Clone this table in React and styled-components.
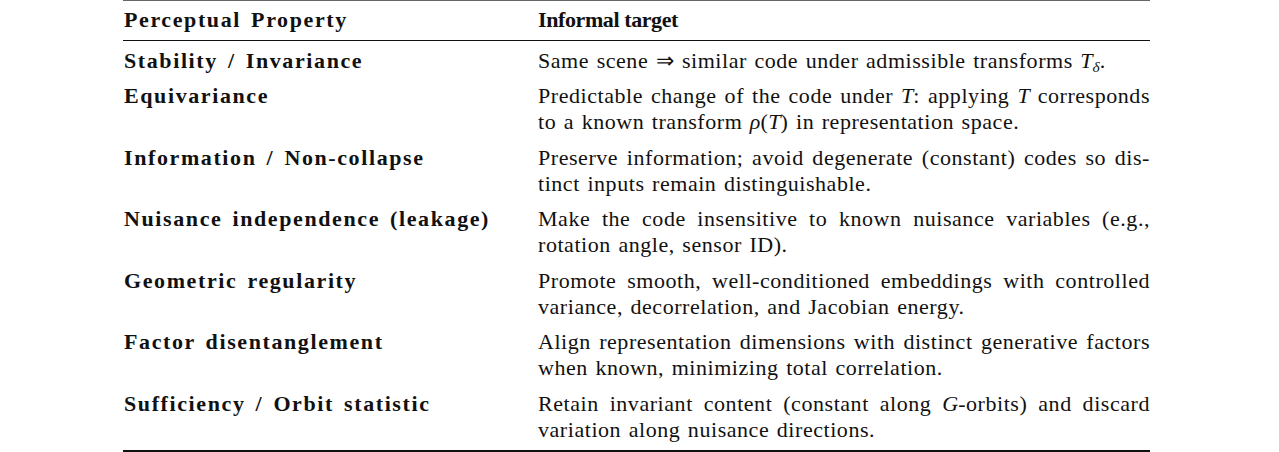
import styled, { createGlobalStyle } from "styled-components";

const GlobalStyle = createGlobalStyle`
  html, body {
    margin: 0;
    padding: 0;
    background: #ffffff;
  }
  body {
    font-family: "Liberation Serif", "Times New Roman", serif;
    color: #111;
  }
`;

const Page = styled.div`
  width: 1279px;
  height: 452px;
  overflow: hidden;
  padding-left: 123px;
  box-sizing: border-box;
`;

const Table = styled.div`
  width: 1027px;
  border-top: 1px solid #666;
  border-bottom: 2px solid #111;
`;

const Row = styled.div`
  display: grid;
  grid-template-columns: 415px 1fr;
  padding: ${(p) => (p.$head ? "6px 0 7px" : "4.5px 0 5px")};
  border-bottom: ${(p) => (p.$head ? "1.5px solid #111" : "none")};
`;

const Body = styled.div`
  padding: 2px 0 2px;
`;

const Property = styled.div`
  font-weight: 700;
  font-size: 22px;
  line-height: 26px;
  letter-spacing: 1.6px;
  word-spacing: 3px;
  padding-left: 1px;
  white-space: nowrap;
`;

const Target = styled.div`
  font-size: 22px;
  line-height: 26px;
  font-weight: ${(p) => (p.$head ? 700 : 400)};
  letter-spacing: ${(p) => (p.$head ? "-0.4px" : "0.55px")};
  word-spacing: ${(p) => (p.$head ? "0" : "1.5px")};
`;

const Line = styled.div`
  text-align: ${(p) => (p.$last ? "left" : "justify")};
  text-align-last: ${(p) => (p.$last ? "left" : "justify")};
  white-space: nowrap;
`;

const M = styled.i`
  font-style: italic;
  letter-spacing: 0;
`;

const Sub = styled.sub`
  font-size: 0.7em;
  vertical-align: -0.25em;
  line-height: 0;
`;

const rows = [
  {
    name: "Stability / Invariance",
    lines: [
      <>
        Same scene ⇒ similar code under admissible transforms <M>T</M>
        <Sub>
          <M>δ</M>
        </Sub>
        .
      </>,
    ],
  },
  {
    name: "Equivariance",
    lines: [
      <>
        Predictable change of the code under <M>T</M>: applying <M>T</M>{" "}
        corresponds
      </>,
      <>
        to a known transform <M>ρ</M>(<M>T</M>) in representation space.
      </>,
    ],
  },
  {
    name: "Information / Non-collapse",
    lines: [
      "Preserve information; avoid degenerate (constant) codes so dis-",
      "tinct inputs remain distinguishable.",
    ],
  },
  {
    name: "Nuisance independence (leakage)",
    lines: [
      "Make the code insensitive to known nuisance variables (e.g.,",
      "rotation angle, sensor ID).",
    ],
  },
  {
    name: "Geometric regularity",
    lines: [
      "Promote smooth, well-conditioned embeddings with controlled",
      "variance, decorrelation, and Jacobian energy.",
    ],
  },
  {
    name: "Factor disentanglement",
    lines: [
      "Align representation dimensions with distinct generative factors",
      "when known, minimizing total correlation.",
    ],
  },
  {
    name: "Sufficiency / Orbit statistic",
    lines: [
      <>
        Retain invariant content (constant along <M>G</M>-orbits) and discard
      </>,
      "variation along nuisance directions.",
    ],
  },
];

export default function App() {
  return (
    <>
      <GlobalStyle />
      <Page>
        <Table>
          <Row $head>
            <Property>Perceptual Property</Property>
            <Target $head>Informal target</Target>
          </Row>
          <Body>
            {rows.map((r) => (
              <Row key={r.name}>
                <Property>{r.name}</Property>
                <Target>
                  {r.lines.map((l, i) => (
                    <Line key={i} $last={i === r.lines.length - 1}>
                      {l}
                    </Line>
                  ))}
                </Target>
              </Row>
            ))}
          </Body>
        </Table>
      </Page>
    </>
  );
}
